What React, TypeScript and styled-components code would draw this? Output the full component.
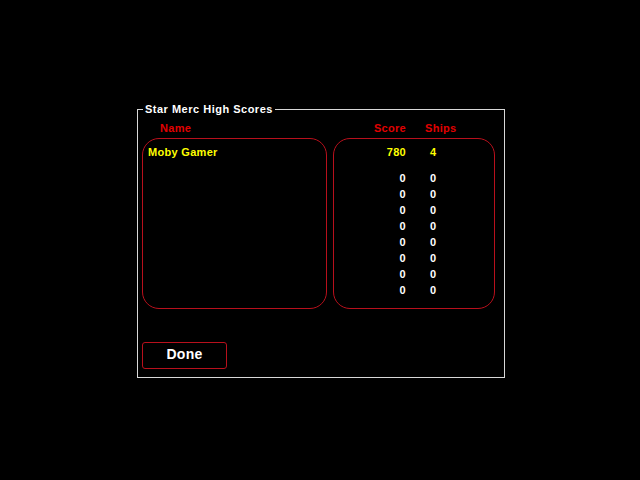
import styled, { createGlobalStyle } from 'styled-components'

const GlobalStyle = createGlobalStyle`
    html, body {
        margin: 0;
        padding: 0;
        background: #000000;
    }
    body {
        font-family: "Liberation Sans", Arial, sans-serif;
        font-size: 11px;
        font-weight: bold;
        letter-spacing: 0.3px;
        color: #ffffff;
    }
`

const Screen = styled.div`
    width: 640px;
    height: 480px;
    box-sizing: border-box;
    padding: 103px 0 0 137px;
`

const Frame = styled.fieldset`
    box-sizing: border-box;
    width: 368px;
    margin: 0;
    padding: 6px 8px 8px 4px;
    min-width: 0;
    border: 1px solid #d8d8d8;
`

const Title = styled.legend`
    margin-left: 1px;
    padding: 0 2px;
    line-height: 12px;
    letter-spacing: 0.5px;
    color: #ffffff;
`

const HeaderRow = styled.div`
    display: flex;
    gap: 6px;
    height: 14px;
    line-height: 14px;
    color: #e00000;
    margin-bottom: 3px;
`

const NameHead = styled.div`
    width: 185px;
    padding-left: 18px;
    box-sizing: border-box;
`

const ScoreHead = styled.div`
    width: 73px;
    text-align: right;
`

const ShipsHead = styled.div`
    margin-left: 13px;
`

const Panels = styled.div`
    display: flex;
    gap: 6px;
`

const Panel = styled.div<{ width: number }>`
    box-sizing: border-box;
    width: ${({ width }) => width}px;
    height: 171px;
    border: 1px solid #b8101c;
    border-radius: 17px;
    padding-top: 5px;
`

const NameRow = styled.div<{ highlight?: boolean }>`
    height: 16px;
    line-height: 16px;
    padding-left: 5px;
    color: ${({ highlight }) => (highlight ? '#ffff00' : '#ffffff')};
`

const ScoreRow = styled.div<{ highlight?: boolean }>`
    display: grid;
    grid-template-columns: 72px 1fr;
    height: 16px;
    line-height: 16px;
    color: ${({ highlight }) => (highlight ? '#ffff00' : '#ffffff')};
    margin-bottom: ${({ highlight }) => (highlight ? '10px' : '0')};
`

const Score = styled.span`
    text-align: right;
`

const Ships = styled.span`
    padding-left: 24px;
`

const Done = styled.button`
    display: block;
    box-sizing: border-box;
    width: 85px;
    height: 27px;
    margin: 33px 0 0 0;
    padding: 0 0 3px 0;
    background: #000000;
    border: 1px solid #b8101c;
    border-radius: 3px;
    font-family: "Liberation Sans", Arial, sans-serif;
    font-size: 14px;
    font-weight: bold;
    color: #ffffff;
    letter-spacing: 0.3px;
`

const scores = [
    { name: 'Moby Gamer', score: 780, ships: 4 },
    { name: '', score: 0, ships: 0 },
    { name: '', score: 0, ships: 0 },
    { name: '', score: 0, ships: 0 },
    { name: '', score: 0, ships: 0 },
    { name: '', score: 0, ships: 0 },
    { name: '', score: 0, ships: 0 },
    { name: '', score: 0, ships: 0 },
    { name: '', score: 0, ships: 0 },
]

export default function App() {
    return (
        <Screen>
            <GlobalStyle />
            <Frame>
                <Title>Star Merc High Scores</Title>
                <HeaderRow>
                    <NameHead>Name</NameHead>
                    <ScoreHead>Score</ScoreHead>
                    <ShipsHead>Ships</ShipsHead>
                </HeaderRow>
                <Panels>
                    <Panel width={185}>
                        {scores.slice(0, 1).map((s, i) => (
                            <NameRow key={'name' + i} highlight={i === 0}>{s.name}</NameRow>
                        ))}
                    </Panel>
                    <Panel width={162}>
                        {scores.map((s, i) => (
                            <ScoreRow key={'score' + i} highlight={i === 0}>
                                <Score>{s.score}</Score>
                                <Ships>{s.ships}</Ships>
                            </ScoreRow>
                        ))}
                    </Panel>
                </Panels>
                <Done>Done</Done>
            </Frame>
        </Screen>
    )
}
